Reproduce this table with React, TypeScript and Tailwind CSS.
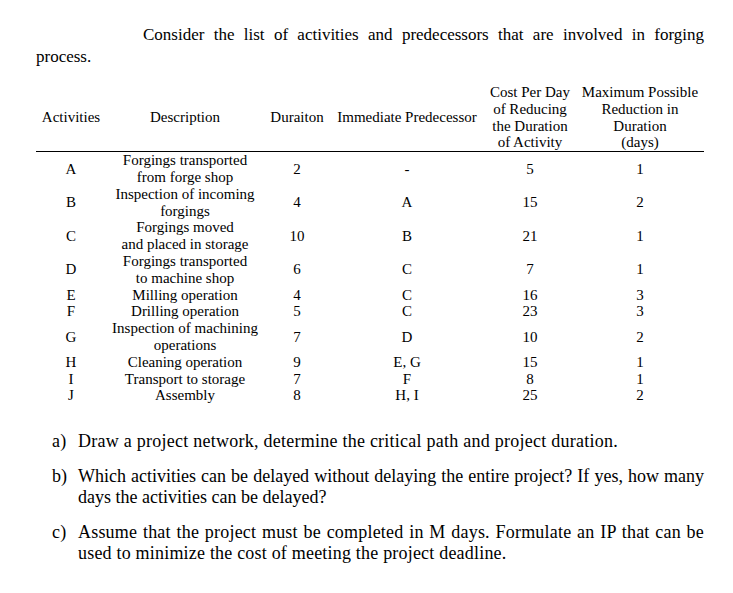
const rows = [
  { act: "A", desc: ["Forgings transported", "from forge shop"], dur: "2", pred: "-", cost: "5", max: "1" },
  { act: "B", desc: ["Inspection of incoming", "forgings"], dur: "4", pred: "A", cost: "15", max: "2" },
  { act: "C", desc: ["Forgings moved", "and placed in storage"], dur: "10", pred: "B", cost: "21", max: "1" },
  { act: "D", desc: ["Forgings transported", "to machine shop"], dur: "6", pred: "C", cost: "7", max: "1" },
  { act: "E", desc: ["Milling operation"], dur: "4", pred: "C", cost: "16", max: "3" },
  { act: "F", desc: ["Drilling operation"], dur: "5", pred: "C", cost: "23", max: "3" },
  { act: "G", desc: ["Inspection of machining", "operations"], dur: "7", pred: "D", cost: "10", max: "2" },
  { act: "H", desc: ["Cleaning operation"], dur: "9", pred: "E, G", cost: "15", max: "1" },
  { act: "I", desc: ["Transport to storage"], dur: "7", pred: "F", cost: "8", max: "1" },
  { act: "J", desc: ["Assembly"], dur: "8", pred: "H, I", cost: "25", max: "2" },
];

const grid = "grid grid-cols-[70px_158px_66px_154px_92px_128px]";

function Cell({ children }: { children: React.ReactNode }) {
  return <div className="flex flex-col items-center justify-center text-center">{children}</div>;
}

function Item({ label, lines, className = "" }: { label: string; lines: string[]; className?: string }) {
  return (
    <li className={`flex ${className}`}>
      <span className="w-[42px] shrink-0 pl-[16px]">{label}</span>
      <span className="min-w-0 flex-1">
        {lines.map((l, i) => (
          <span
            key={l}
            className={
              i < lines.length - 1
                ? "block whitespace-nowrap text-justify [text-align-last:justify]"
                : "block"
            }
          >
            {l}
          </span>
        ))}
      </span>
    </li>
  );
}

export default function App() {
  return (
    <div className="min-h-[593px] w-[733px] bg-white pl-[36px] pr-[29px] pt-[24px] text-black [font-family:'Liberation_Serif',serif]">
      <p className="text-[17px] leading-[22px]">
        <span className="block pl-[107px] text-justify [text-align-last:justify]">
          Consider the list of activities and predecessors that are involved in forging
        </span>
        <span className="block">process.</span>
      </p>

      <div className="mt-[16px] text-[15px] leading-[16.8px]">
        <div className={`${grid} border-b border-black`}>
          <Cell>Activities</Cell>
          <Cell>Description</Cell>
          <Cell>Duraiton</Cell>
          <Cell>Immediate Predecessor</Cell>
          <Cell>
            <span>Cost Per Day</span>
            <span>of Reducing</span>
            <span>the Duration</span>
            <span>of Activity</span>
          </Cell>
          <Cell>
            <span>Maximum Possible</span>
            <span>Reduction in</span>
            <span>Duration</span>
            <span>(days)</span>
          </Cell>
        </div>
        {rows.map((r) => (
          <div key={r.act} className={grid}>
            <Cell>{r.act}</Cell>
            <Cell>
              {r.desc.map((d) => (
                <span key={d}>{d}</span>
              ))}
            </Cell>
            <Cell>{r.dur}</Cell>
            <Cell>{r.pred}</Cell>
            <Cell>{r.cost}</Cell>
            <Cell>{r.max}</Cell>
          </div>
        ))}
      </div>

      <ol className="mt-[27px] flex flex-col gap-[14px] text-[18px] leading-[21px]">
        <Item
          className="tracking-[0.25px]"
          label="a)"
          lines={["Draw a project network, determine the critical path and project duration."]}
        />
        <Item
          label="b)"
          lines={[
            "Which activities can be delayed without delaying the entire project? If yes, how many",
            "days the activities can be delayed?",
          ]}
        />
        <Item
          className="tracking-[0.2px]"
          label="c)"
          lines={[
            "Assume that the project must be completed in M days. Formulate an IP that can be",
            "used to minimize the cost of meeting the project deadline.",
          ]}
        />
      </ol>
    </div>
  );
}
